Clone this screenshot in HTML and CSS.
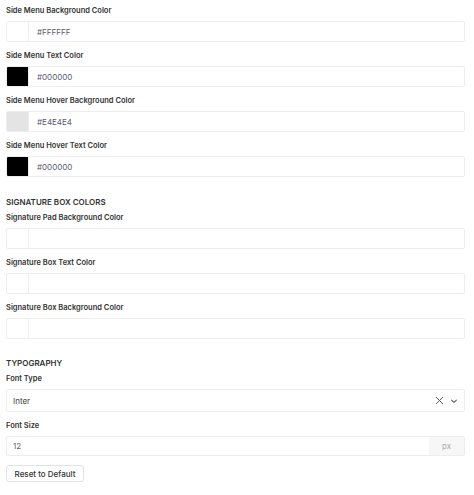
FILE: index.html
```html
<!DOCTYPE html>
<html>
<head>
<meta charset="utf-8">
<link rel="stylesheet" href="styles.css">
</head>
<body>
<div class="page">
  <div class="field">
    <div class="label">Side Menu Background Color</div>
    <div class="color-input">
      <span class="swatch" style="background:#FFFFFF"></span>
      <span class="hex">#FFFFFF</span>
    </div>
  </div>
  <div class="field">
    <div class="label">Side Menu Text Color</div>
    <div class="color-input">
      <span class="swatch" style="background:#000000"></span>
      <span class="hex">#000000</span>
    </div>
  </div>
  <div class="field">
    <div class="label">Side Menu Hover Background Color</div>
    <div class="color-input">
      <span class="swatch" style="background:#E4E4E4"></span>
      <span class="hex">#E4E4E4</span>
    </div>
  </div>
  <div class="field">
    <div class="label">Side Menu Hover Text Color</div>
    <div class="color-input">
      <span class="swatch" style="background:#000000"></span>
      <span class="hex">#000000</span>
    </div>
  </div>

  <div class="section-title">SIGNATURE BOX COLORS</div>
  <div class="field">
    <div class="label">Signature Pad Background Color</div>
    <div class="color-input">
      <span class="swatch"></span>
      <span class="hex"></span>
    </div>
  </div>
  <div class="field">
    <div class="label">Signature Box Text Color</div>
    <div class="color-input">
      <span class="swatch"></span>
      <span class="hex"></span>
    </div>
  </div>
  <div class="field">
    <div class="label">Signature Box Background Color</div>
    <div class="color-input">
      <span class="swatch"></span>
      <span class="hex"></span>
    </div>
  </div>

  <div class="section-title">TYPOGRAPHY</div>
  <div class="field">
    <div class="label">Font Type</div>
    <div class="select">
      <span class="select-value">Inter</span>
      <span class="select-icons">
        <svg class="icon-x" width="9" height="9" viewBox="0 0 10 10"><path d="M1.5 1.5 L8.5 8.5 M8.5 1.5 L1.5 8.5" stroke="#555" stroke-width="1.1" fill="none" stroke-linecap="round"/></svg>
        <svg class="icon-chev" width="8" height="8" viewBox="0 0 10 10"><path d="M2 3.8 L5 6.6 L8 3.8" stroke="#555" stroke-width="1.3" fill="none" stroke-linecap="round" stroke-linejoin="round"/></svg>
      </span>
    </div>
  </div>
  <div class="field">
    <div class="label">Font Size</div>
    <div class="number-input">
      <span class="number-value">12</span>
      <span class="addon">px</span>
    </div>
  </div>
  <button class="reset-btn">Reset to Default</button>
</div>
</body>
</html>
```
FILE: styles.css
```css
html, body {
  margin: 0;
  padding: 0;
  background: #ffffff;
}
body {
  font-family: "Inter", "Liberation Sans", sans-serif;
  color: #333333;
}
.page {
  padding: 5px 9px 0 6px;
  display: flex;
  flex-direction: column;
}
.field {
  display: flex;
  flex-direction: column;
  gap: 4px;
  margin-bottom: 8px;
}
.label {
  font-size: 7.5px;
  line-height: 12px;
  font-weight: 600;
  color: #333333;
}
.color-input {
  display: flex;
  height: 21px;
  border: 1px solid #ededed;
  border-radius: 2px;
  box-sizing: border-box;
  background: #fff;
}
.swatch {
  width: 22px;
  flex: none;
  border-right: 1px solid #ededed;
  box-sizing: border-box;
  border-radius: 1px 0 0 1px;
}
.hex {
  display: flex;
  align-items: center;
  padding-left: 8px;
  font-size: 8px;
  color: #5c5a70;
}
.section-title {
  margin-top: 10.5px;
  margin-bottom: 4px;
  font-size: 8px;
  line-height: 12px;
  font-weight: 600;
  color: #333333;
}
.select {
  display: flex;
  align-items: center;
  justify-content: space-between;
  height: 23px;
  border: 1px solid #ededed;
  border-radius: 2px;
  box-sizing: border-box;
  padding: 0 6px 0 6px;
}
.select-value {
  font-size: 8px;
  color: #444;
}
.select-icons {
  display: flex;
  align-items: center;
  gap: 6px;
}
.number-input {
  display: flex;
  height: 20px;
  border: 1px solid #ededed;
  border-radius: 2px;
  box-sizing: border-box;
}
.number-value {
  flex: 1;
  display: flex;
  align-items: center;
  padding-left: 6px;
  font-size: 8px;
  color: #666;
}
.addon {
  width: 35px;
  display: flex;
  align-items: center;
  justify-content: center;
  background: #f7f7f7;
  font-size: 8px;
  color: #aaa;
}
.reset-btn {
  align-self: flex-start;
  margin-top: 1px;
  height: 17px;
  width: 78px;
  padding: 0;
  border: 1px solid #e3e3e3;
  border-radius: 3px;
  background: #fff;
  font-family: "Inter", "Liberation Sans", sans-serif;
  font-size: 8px;
  font-weight: 500;
  color: #333;
}
```
